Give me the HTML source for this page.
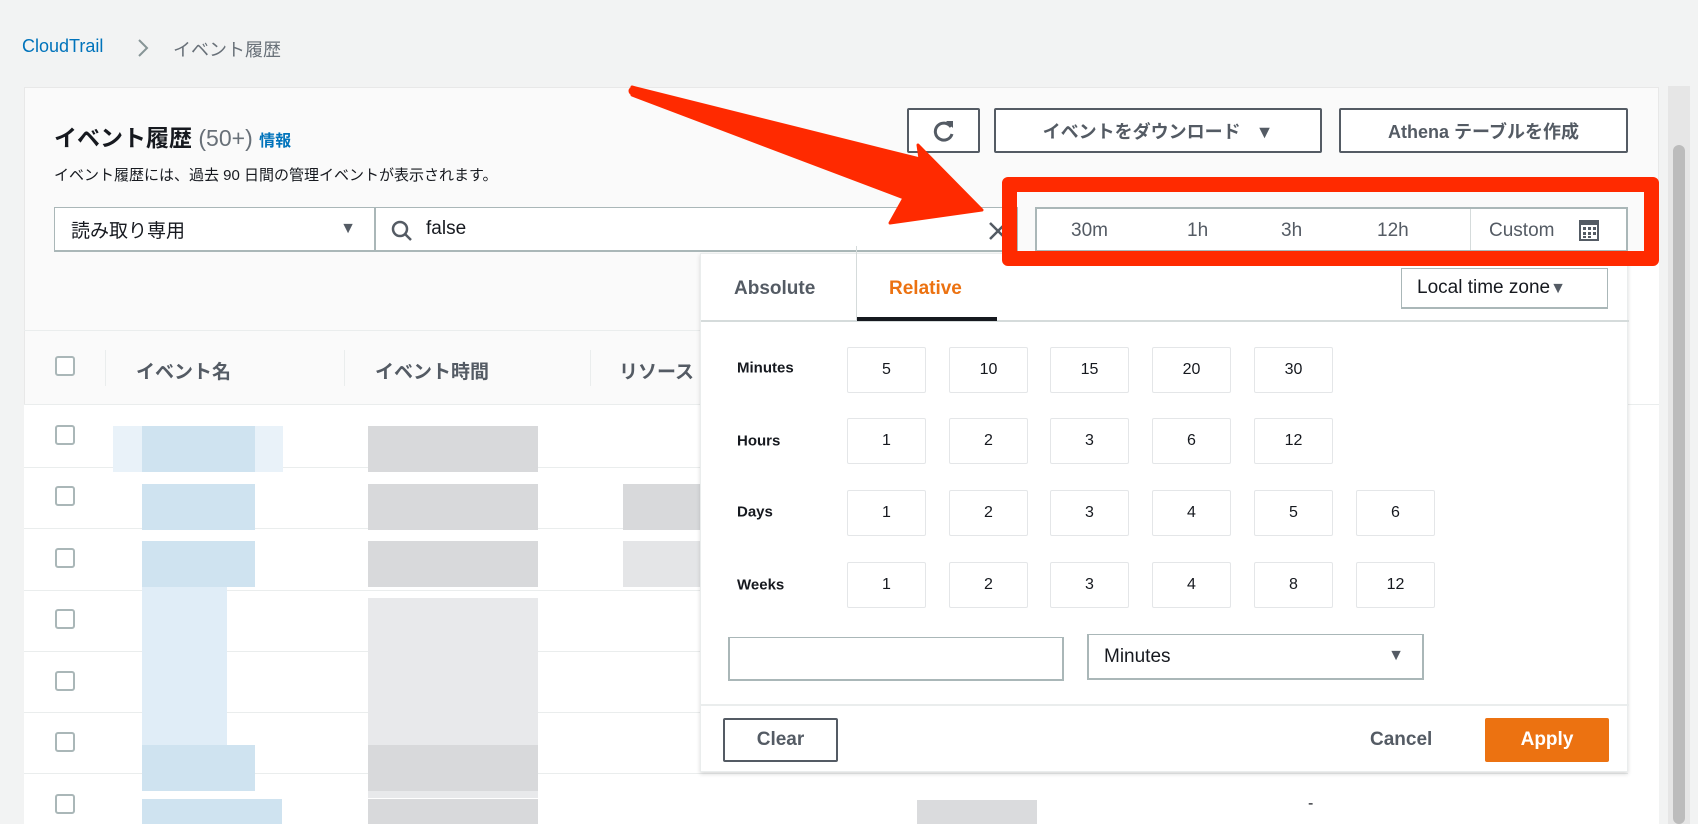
<!DOCTYPE html>
<html><head><meta charset="utf-8"><style>
*{box-sizing:border-box;margin:0;padding:0}
body{width:1698px;height:824px;overflow:hidden;background:#f2f3f3;font-family:"Liberation Sans","Noto Sans CJK JP",sans-serif;color:#16191f;position:relative}
.a{position:absolute}
.btn{position:absolute;border:2px solid #545b64;border-radius:2px;background:#fff;font-weight:bold;font-size:18px;color:#545b64;display:flex;align-items:center;justify-content:center}
.nb{position:absolute;width:79px;height:46px;border:1px solid #e4e6e8;border-radius:2px;background:#fff;font-size:16px;display:flex;align-items:center;justify-content:center;color:#16191f}
.lbl{position:absolute;left:737px;font-size:15px;font-weight:bold;transform:translateY(-50%)}
.cb{position:absolute;left:55px;width:20px;height:20px;border:2px solid #aab7b8;border-radius:3px;background:#fff}
.rl{position:absolute;left:24px;width:676px;height:1px;background:#eaeded}
.bl{position:absolute;background:#cfe3f0}
.gr{position:absolute;background:#d8d9db}
.fld{position:absolute;background:#fff;border:1px solid #aab7b8;border-bottom-width:2px;font-size:19px;display:flex;align-items:center}
</style></head><body>
<div class="a" style="left:22px;top:36px;font-size:18px;color:#0073bb">CloudTrail</div>
<svg class="a" style="left:137px;top:38px" width="12" height="20"><path d="M2 2L10 10L2 18" fill="none" stroke="#879596" stroke-width="2"/></svg>
<div class="a" style="left:173px;top:36px;font-size:18px;color:#687078">イベント履歴</div>
<div class="a" style="left:1668px;top:86px;width:22px;height:738px;background:#e6e6e6"></div>
<div class="a" style="left:1673px;top:145px;width:12px;height:679px;background:#bcbcbc;border-radius:6px"></div>

<div class="a" style="left:24px;top:87px;width:1635px;height:737px;background:#fafafa;border:1px solid #e8e8e8"></div>
<div class="a" style="left:54px;top:119px;font-size:23px;font-weight:bold">イベント履歴 <span style="font-weight:normal;color:#687078">(50+)</span> <span style="font-size:16px;color:#0073bb">情報</span></div>
<div class="a" style="left:54px;top:164px;font-size:15px">イベント履歴には、過去 90 日間の管理イベントが表示されます。</div>

<div class="btn" style="left:907px;top:108px;width:73px;height:45px"><svg width="24" height="26" viewBox="0 0 24 26"><path d="M19 9A8.5 8.5 0 1 0 20 16" fill="none" stroke="#545b64" stroke-width="3"/><path d="M14 3L21 3L21 10Z" fill="#545b64"/></svg></div>
<div class="btn" style="left:994px;top:108px;width:328px;height:45px">イベントをダウンロード&nbsp;&nbsp;&nbsp;▼</div>
<div class="btn" style="left:1339px;top:108px;width:289px;height:45px">Athena テーブルを作成</div>

<div class="fld" style="left:54px;top:207px;width:321px;height:45px;padding-left:16px">読み取り専用<span style="position:absolute;right:18px;top:12px;font-size:16px;color:#545b64">▼</span></div>
<div class="fld" style="left:375px;top:207px;width:643px;height:45px;padding-left:50px">false
<svg class="a" style="left:14px;top:11px" width="24" height="24" viewBox="0 0 24 24"><circle cx="10" cy="10" r="7" fill="none" stroke="#545b64" stroke-width="2.5"/><path d="M15 15L21 21" stroke="#545b64" stroke-width="2.5"/></svg>
<svg class="a" style="right:8px;top:12px" width="22" height="22"><path d="M3 3L19 19M19 3L3 19" stroke="#545b64" stroke-width="2.5"/></svg></div>

<div class="a" style="left:1035px;top:207px;width:593px;height:45px;background:#fff;border:2px solid #aab7b8;font-size:19px;color:#545b64">
<span class="a" style="left:34px;top:11px">30m</span><span class="a" style="left:150px;top:11px">1h</span><span class="a" style="left:244px;top:11px">3h</span><span class="a" style="left:340px;top:11px">12h</span>
<div class="a" style="left:433px;top:0;width:1px;height:41px;background:#d5dbdb"></div>
<span class="a" style="left:452px;top:11px">Custom</span>
<svg class="a" style="left:542px;top:11px" width="20" height="21"><rect x="1" y="1" width="18" height="19" fill="none" stroke="#545b64" stroke-width="2"/><rect x="1" y="1" width="18" height="4" fill="#545b64"/><g fill="#545b64"><rect x="4" y="7" width="3" height="3"/><rect x="9" y="7" width="3" height="3"/><rect x="14" y="7" width="3" height="3"/><rect x="4" y="12" width="3" height="3"/><rect x="9" y="12" width="3" height="3"/><rect x="14" y="12" width="3" height="3"/><rect x="4" y="16" width="3" height="2"/><rect x="9" y="16" width="3" height="2"/></g></svg>
</div>

<!-- table -->
<div class="a" style="left:24px;top:330px;width:1635px;height:1px;background:#eaeded"></div>
<div class="a" style="left:24px;top:404px;width:1635px;height:1px;background:#eaeded"></div>
<div class="a" style="left:24px;top:405px;width:1635px;height:419px;background:#fff"></div>
<div class="cb" style="top:356px"></div>
<div class="a" style="left:105px;top:350px;width:1px;height:36px;background:#eaeded"></div>
<div class="a" style="left:344px;top:350px;width:1px;height:36px;background:#eaeded"></div>
<div class="a" style="left:590px;top:350px;width:1px;height:36px;background:#eaeded"></div>
<div class="a" style="left:136px;top:357px;font-size:19px;font-weight:bold;color:#545b64">イベント名</div>
<div class="a" style="left:375px;top:357px;font-size:19px;font-weight:bold;color:#545b64">イベント時間</div>
<div class="a" style="left:619px;top:357px;font-size:19px;font-weight:bold;color:#545b64">リソース</div>

<div class="rl" style="top:467px"></div><div class="rl" style="top:528px"></div><div class="rl" style="top:590px"></div><div class="rl" style="top:651px"></div><div class="rl" style="top:712px"></div><div class="rl" style="top:773px"></div>
<div class="cb" style="top:425px"></div><div class="cb" style="top:486px"></div><div class="cb" style="top:548px"></div><div class="cb" style="top:609px"></div><div class="cb" style="top:671px"></div><div class="cb" style="top:732px"></div><div class="cb" style="top:794px"></div>

<div class="bl" style="left:113px;top:426px;width:170px;height:46px;background:#e9f2f9"></div>
<div class="bl" style="left:142px;top:426px;width:113px;height:46px"></div>
<div class="gr" style="left:368px;top:426px;width:170px;height:46px"></div>
<div class="bl" style="left:142px;top:484px;width:113px;height:46px"></div>
<div class="gr" style="left:368px;top:484px;width:170px;height:46px"></div>
<div class="gr" style="left:623px;top:484px;width:77px;height:46px"></div>
<div class="bl" style="left:142px;top:541px;width:113px;height:46px"></div>
<div class="gr" style="left:368px;top:541px;width:170px;height:46px"></div>
<div class="gr" style="left:623px;top:541px;width:77px;height:46px;background:#e4e5e7"></div>
<div class="bl" style="left:142px;top:587px;width:85px;height:200px;background:#e0edf7"></div>
<div class="gr" style="left:368px;top:598px;width:170px;height:200px;background:#e8e9eb"></div>
<div class="bl" style="left:142px;top:745px;width:113px;height:46px"></div>
<div class="gr" style="left:368px;top:745px;width:170px;height:46px"></div>
<div class="bl" style="left:142px;top:799px;width:140px;height:25px"></div>
<div class="gr" style="left:368px;top:799px;width:170px;height:25px"></div>
<div class="gr" style="left:917px;top:800px;width:120px;height:24px;background:#dadbdd"></div>
<div class="a" style="left:1308px;top:795px;font-size:16px">-</div>
<div class="rl" style="left:700px;width:959px;top:467px"></div><div class="rl" style="left:700px;width:959px;top:528px"></div><div class="rl" style="left:700px;width:959px;top:590px"></div><div class="rl" style="left:700px;width:959px;top:651px"></div><div class="rl" style="left:700px;width:959px;top:712px"></div><div class="rl" style="left:700px;width:959px;top:773px"></div>
<div class="a" style="left:1628px;top:253px;width:31px;height:571px;background:#fff"></div>
<div class="rl" style="left:1628px;width:31px;top:404px"></div>

<!-- dropdown -->
<div class="a" style="left:700px;top:253px;width:928px;height:519px;background:#fff;border:1px solid #eaeded;box-shadow:0 2px 4px rgba(0,0,0,.15)">
<div class="a" style="left:0;top:66px;width:928px;height:2px;background:#d5dbdb"></div>
<div class="a" style="left:155px;top:-8px;width:1px;height:74px;background:#d5dbdb"></div>
<div class="a" style="left:156px;top:63px;width:140px;height:4px;background:#16191f"></div>
<div class="a" style="left:33px;top:24px;font-size:19px;font-weight:bold;color:#545b64">Absolute</div>
<div class="a" style="left:188px;top:24px;font-size:19px;font-weight:bold;color:#ec7211">Relative</div>
<div class="a" style="left:700px;top:14px;width:207px;height:41px;border:1px solid #aab7b8;border-bottom-width:2px;font-size:19px;padding:8px 0 0 15px">Local time zone<span style="font-size:16px;color:#545b64">▼</span></div>
<div class="a" style="left:0;top:450px;width:928px;height:2px;background:#eaeded"></div>
<div class="a" style="left:27px;top:383px;width:336px;height:44px;border:2px solid #aab7b8;border-top-width:1px"></div>
<div class="a" style="left:386px;top:380px;width:337px;height:46px;border:2px solid #aab7b8;border-top-width:1px;font-size:19px;padding:11px 0 0 15px">Minutes<span style="position:absolute;right:18px;top:12px;font-size:16px;color:#545b64">▼</span></div>
<div class="btn" style="left:22px;top:464px;width:115px;height:44px;font-size:19px">Clear</div>
<div class="a" style="left:669px;top:475px;font-size:19px;font-weight:bold;color:#545b64">Cancel</div>
<div class="a" style="left:784px;top:464px;width:124px;height:44px;background:#ec7211;border-radius:2px;color:#fff;font-size:19px;font-weight:bold;display:flex;align-items:center;justify-content:center">Apply</div>
</div>
<div class="lbl" style="top:368px">Minutes</div>
<div class="lbl" style="top:441px">Hours</div>
<div class="lbl" style="top:512px">Days</div>
<div class="lbl" style="top:585px">Weeks</div>
<div class="nb" style="left:847px;top:347px">5</div><div class="nb" style="left:949px;top:347px">10</div><div class="nb" style="left:1050px;top:347px">15</div><div class="nb" style="left:1152px;top:347px">20</div><div class="nb" style="left:1254px;top:347px">30</div>
<div class="nb" style="left:847px;top:418px">1</div><div class="nb" style="left:949px;top:418px">2</div><div class="nb" style="left:1050px;top:418px">3</div><div class="nb" style="left:1152px;top:418px">6</div><div class="nb" style="left:1254px;top:418px">12</div>
<div class="nb" style="left:847px;top:490px">1</div><div class="nb" style="left:949px;top:490px">2</div><div class="nb" style="left:1050px;top:490px">3</div><div class="nb" style="left:1152px;top:490px">4</div><div class="nb" style="left:1254px;top:490px">5</div><div class="nb" style="left:1356px;top:490px">6</div>
<div class="nb" style="left:847px;top:562px">1</div><div class="nb" style="left:949px;top:562px">2</div><div class="nb" style="left:1050px;top:562px">3</div><div class="nb" style="left:1152px;top:562px">4</div><div class="nb" style="left:1254px;top:562px">8</div><div class="nb" style="left:1356px;top:562px">12</div>

<!-- annotation -->
<div class="a" style="left:1002px;top:177px;width:657px;height:89px;border:15px solid #ff2a00;border-radius:6px"></div>
<svg class="a" style="left:0;top:0" width="1698" height="824"><polygon points="632,87 920,159 918,145 982,210 890,223 904,198 632,95" fill="#ff2a00" stroke="#ff2a00" stroke-width="3" stroke-linejoin="round"/><circle cx="633" cy="91" r="4.5" fill="#ff2a00"/></svg>
</body></html>
